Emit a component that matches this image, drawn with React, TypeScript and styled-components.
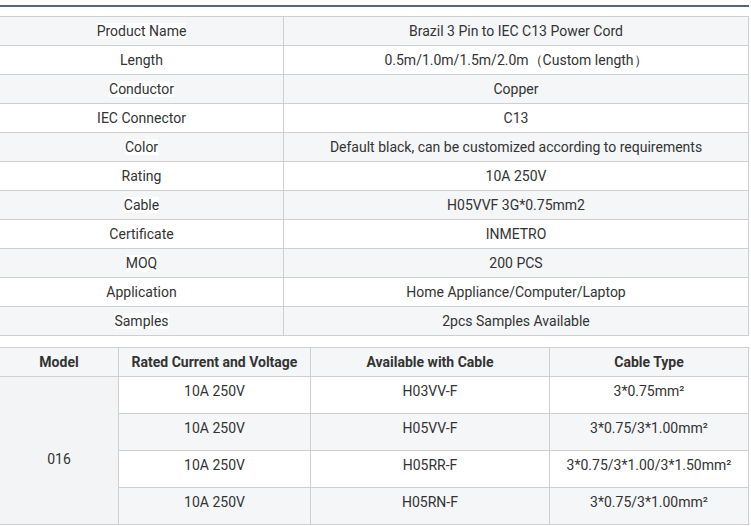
import React from "react";
import styled, { createGlobalStyle } from "styled-components";

const Global = createGlobalStyle`
  html, body { margin: 0; padding: 0; background: #fff; }
  body { font-family: Roboto, "Liberation Sans", Arial, sans-serif; color: #333; font-size: 14px; }
`;

const Page = styled.div`
  padding-top: 5px;
  width: 751px;
  overflow: hidden;
`;

const Rule = styled.div`
  width: 749px;
  height: 2px;
  background: #5a6479;
  margin-bottom: 9px;
`;

const Table = styled.table`
  border-collapse: collapse;
  table-layout: fixed;
  width: 750px;
  margin-left: -1px;
  margin-bottom: 11px;
`;

const Row = styled.tr<{ $alt?: boolean }>`
  background: ${(p) => (p.$alt ? "#f5f6f8" : "#fff")};
`;

const Cell = styled.td`
  border: 1px solid #cfcfcf;
  height: 28px;
  padding: 0 8px;
  text-align: center;
  vertical-align: middle;
  line-height: 16px;
  font-size: 14px;
  color: #333;
`;

const Highlight = styled.span<{ $on?: boolean }>`
  background: ${(p) => (p.$on ? "#fff" : "transparent")};
`;

const Head = styled.th`
  border: 1px solid #cfcfcf;
  height: 28px;
  padding: 0 8px;
  text-align: center;
  vertical-align: middle;
  font-weight: 700;
  font-size: 14px;
  color: #333;
  background: #f5f6f8;
`;

const BodyCell = styled.td`
  border: 1px solid #cfcfcf;
  height: 36px;
  padding: 5px 8px 13px;
  box-sizing: border-box;
  text-align: center;
  vertical-align: top;
  line-height: 18px;
  font-size: 14px;
  color: #333;
`;

const ModelCell = styled.td`
  border: 1px solid #cfcfcf;
  padding: 17px 8px 0;
  text-align: center;
  vertical-align: middle;
  font-size: 14px;
  color: #333;
  background: #f3f4f6;
`;

const specs: [string, string][] = [
  ["Product Name", "Brazil 3 Pin to IEC C13 Power Cord"],
  ["Length", "0.5m/1.0m/1.5m/2.0m（Custom length）"],
  ["Conductor", "Copper"],
  ["IEC Connector", "C13"],
  ["Color", "Default black, can be customized according to requirements"],
  ["Rating", "10A 250V"],
  ["Cable", "H05VVF 3G*0.75mm2"],
  ["Certificate", "INMETRO"],
  ["MOQ", "200 PCS"],
  ["Application", "Home Appliance/Computer/Laptop"],
  ["Samples", "2pcs Samples Available"],
];

const models: [string, string, string][] = [
  ["10A 250V", "H03VV-F", "3*0.75mm²"],
  ["10A 250V", "H05VV-F", "3*0.75/3*1.00mm²"],
  ["10A 250V", "H05RR-F", "3*0.75/3*1.00/3*1.50mm²"],
  ["10A 250V", "H05RN-F", "3*0.75/3*1.00mm²"],
];

export default function App() {
  return (
    <Page>
      <Global />
      <Rule />
      <Table>
        <colgroup>
          <col style={{ width: 284 }} />
          <col />
        </colgroup>
        <tbody>
          {specs.map(([k, v], i) => (
            <Row key={k} $alt={i % 2 === 0}>
              <Cell>
                <Highlight $on={i % 2 === 0 && k !== "IEC Connector"}>{k}</Highlight>
              </Cell>
              <Cell>{v}</Cell>
            </Row>
          ))}
        </tbody>
      </Table>
      <Table>
        <colgroup>
          <col style={{ width: 119 }} />
          <col style={{ width: 192 }} />
          <col style={{ width: 239 }} />
          <col />
        </colgroup>
        <thead>
          <tr>
            <Head>Model</Head>
            <Head>Rated Current and Voltage</Head>
            <Head>Available with Cable</Head>
            <Head>Cable Type</Head>
          </tr>
        </thead>
        <tbody>
          {models.map(([r, c, t], i) => (
            <Row key={c} $alt={i % 2 === 1}>
              {i === 0 && <ModelCell rowSpan={4}>016</ModelCell>}
              <BodyCell>{r}</BodyCell>
              <BodyCell>{c}</BodyCell>
              <BodyCell>{t}</BodyCell>
            </Row>
          ))}
        </tbody>
      </Table>
    </Page>
  );
}
